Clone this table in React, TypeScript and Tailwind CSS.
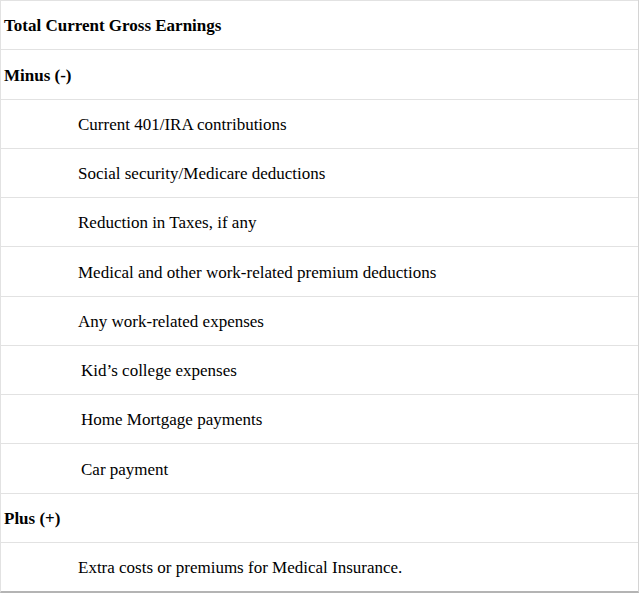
// Earnings breakdown table — plain bordered rows, serif text

type Row = { label: string; bold?: boolean; indent?: "none" | "item" | "itemSpace" };

const rows: Row[] = [
  { label: "Total Current Gross Earnings", bold: true },
  { label: "Minus (-)", bold: true },
  { label: "Current 401/IRA contributions", indent: "item" },
  { label: "Social security/Medicare deductions", indent: "item" },
  { label: "Reduction in Taxes, if any", indent: "item" },
  { label: "Medical and other work-related premium deductions", indent: "item" },
  { label: "Any work-related expenses", indent: "item" },
  { label: "Kid’s college expenses", indent: "itemSpace" },
  { label: "Home Mortgage payments", indent: "itemSpace" },
  { label: "Car payment", indent: "itemSpace" },
  { label: "Plus (+)", bold: true },
  { label: "Extra costs or premiums for Medical Insurance.", indent: "item" },
];

export default function App() {
  return (
    <div className="w-[640px] h-[593px] bg-white" style={{ fontFamily: "'Liberation Serif', 'Times New Roman', serif" }}>
      <div className="w-[639px] border-l border-r border-l-[#e2e2e2] border-r-[#d4d4d4] border-b-2 border-b-[#b4b4b4]">
        {rows.map((row, i) => (
          <div
            key={i}
            className="h-[49.25px] flex items-center pt-[2px] border-t border-[#e2e2e2] text-[17px] text-black"
          >
            <span
              className={
                row.bold
                  ? "pl-[3px] font-bold"
                  : row.indent === "itemSpace"
                  ? "pl-[80px]"
                  : "pl-[77px]"
              }
            >
              {row.label}
            </span>
          </div>
        ))}
      </div>
    </div>
  );
}
